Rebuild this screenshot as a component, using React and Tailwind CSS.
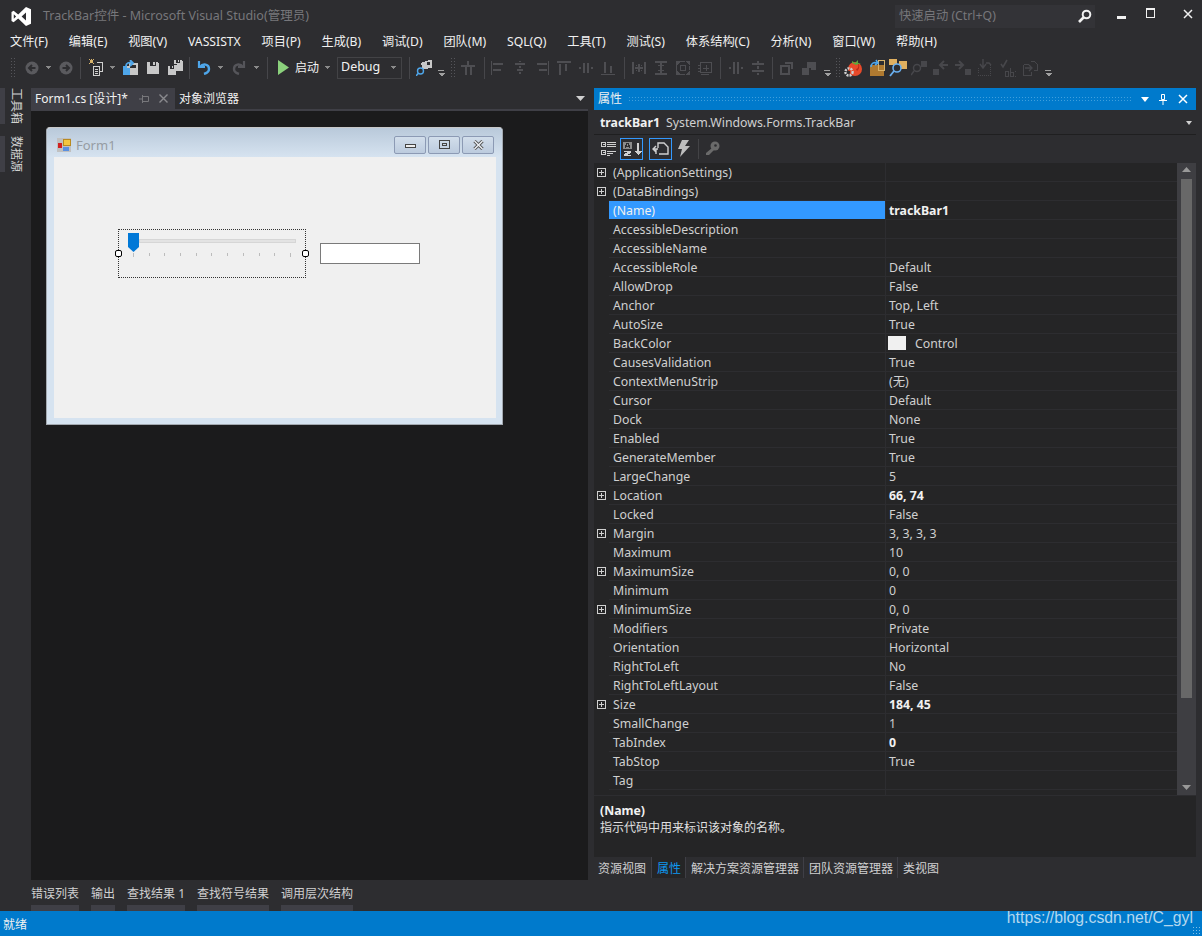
import React from "react";

const G = "#5a5a5e";
const W = "#cfcfcf";
const Svg = ({ w = 16, h = 16, children, className = "" }) => (
  <svg width={w} height={h} viewBox={`0 0 ${w} ${h}`} className={"block shrink-0 " + className} fill="none" shapeRendering="crispEdges">{children}</svg>
);
const Drop = () => (<Svg w={6} h={4}><path d="M0 0h5v1h-1v1h-1v1h-1v-1h-1v-1h-1z" fill="#8a8a8a" /></Svg>);
const OverDrop = () => (<Svg w={7} h={8} className="mt-[10px]"><path d="M0 1h6" stroke="#a0a0a0" /><path d="M0 4h7l-3.5 3.5z" fill="#a0a0a0" /></Svg>);
const Grip = () => (<div className="w-[5px] h-[22px] bg-[radial-gradient(#55555a_1px,transparent_1px)] bg-[length:3px_3px]" />);
const Sep = () => <div className="w-px h-[22px] bg-[#46464a] shrink-0" />;
const Space = ({ c }) => <div className={c + " shrink-0"} />;
const Slot = ({ c = "w-[22px]", children }) => <div className={c + " flex items-center justify-center h-[22px] shrink-0"}>{children}</div>;

const Circ = ({ dir }) => (
  <Svg w={16} h={16}>
    <circle cx="8" cy="8" r="6.5" fill={G} shapeRendering="auto" />
    <path d={dir < 0 ? "M11.5 8h-6M8 5L5 8l3 3" : "M4.5 8h6M8 5l3 3-3 3"} stroke="#2d2d30" strokeWidth="2" shapeRendering="auto" />
  </Svg>
);
const NewProj = () => (
  <Svg w={15} h={17}>
    <path d="M4.5 7.5h6v9h-6z M7.5 3.5h6v9h-3" stroke={W} />
    <path d="M6 10h3M6 12h3M6 14h3" stroke={W} />
    <path d="M0 0h1v1H0zM2 0h1v1H2zM4 0h1v1H4zM1 1h3v3H1zM0 4h1v1H0zM4 4h1v1H4z" fill="#d8b36a" />
  </Svg>
);
const Open = () => (
  <Svg w={15} h={15}>
    <path d="M6 3h9v12H6z" fill="#c8c8c8" />
    <path d="M7 5h6v8H7z" fill="#2d2d30" />
    <path d="M0 6h6l1 2h8l-2 7H0z" fill="#c8c8c8" />
    <path d="M0 6h4v2h3v7H0z" fill="#4ea6ea" />
    <path d="M3 6c0-3 3-4 6-3M7 0l3 3-3 3" stroke="#4ea6ea" strokeWidth="1.8" shapeRendering="auto" />
  </Svg>
);
const Save = () => (
  <Svg w={12} h={12}>
    <path d="M0 0h10l2 2v10H0z" fill="#c8c8c8" />
    <path d="M3 0h6v4H3z" fill="#2d2d30" />
    <path d="M6 0h2v3H6z" fill="#c8c8c8" />
  </Svg>
);
const SaveAll = () => (
  <Svg w={15} h={15}>
    <path d="M6 0h7l2 2v9H6z" fill="#c8c8c8" /><path d="M8 0h4v3H8z" fill="#2d2d30" /><path d="M10 0h1v2h-1z" fill="#c8c8c8" />
    <path d="M5 4h4v1H5zM5 4h1v3H5z" fill="#2d2d30" />
    <path d="M0 6h7l1 1v8H0z" fill="#c8c8c8" /><path d="M2 6h4v3H2z" fill="#2d2d30" /><path d="M4 6h1v2H4z" fill="#c8c8c8" />
  </Svg>
);
const Undo = ({ c = "#4ea6ea", flip }) => (
  <Svg w={14} h={15} className={flip ? "-scale-x-100" : ""}>
    <path d="M2 1v6h6" stroke={c} strokeWidth="2.2" shapeRendering="auto" />
    <path d="M3 7c3-4 9-3 9 2 0 2-2 4-5 5" stroke={c} strokeWidth="2.4" shapeRendering="auto" />
  </Svg>
);
const Play = () => (<Svg w={11} h={15}><path d="M0 0l11 7.5L0 15z" fill="#8bd17c" shapeRendering="auto" /></Svg>);
const Config = () => (
  <Svg w={16} h={17}>
    <path d="M5 4l8-3h3v8l-9 1z" fill="#c8c8c8" /><path d="M11 3h3v3h-3z" fill="#2d2d30" />
    <circle cx="4.5" cy="12" r="3" stroke="#4ea6ea" strokeWidth="1.4" shapeRendering="auto" />
    <path d="M2 14.5L0 17" stroke="#4ea6ea" strokeWidth="1.6" shapeRendering="auto" />
  </Svg>
);
const BAR = "#4e4e52";
const bars = (d, s) => () => (
  <Svg w={16} h={16}>
    <path d={d} fill={BAR} />
    {s ? <path d={s} stroke={BAR} /> : null}
  </Svg>
);
const grayIcons = [
  bars("M1 1h1v14H1zM3 3h10v2H3zM3 9h8v2H3z"),
  bars("M3 3h10v2H3zM5 9h6v2H5zM7 1h2v1H7zM7 6h2v2H7zM7 12h2v2H7z"),
  bars("M14 1h1v14h-1zM3 3h10v2H3zM5 9h8v2H5z"),
  bars("M1 1h14v2H1zM3 4h2v11H3zM9 4h2v7H9z"),
  bars("M1 7h2v2H1zM5 3h2v10H5zM9 3h2v10H9zM13 7h2v2h-2z"),
  bars("M1 14h14v1H1zM4 2h2v11H4zM10 6h2v7h-2z"),
];
const Ic7 = bars("M1 2h2v12H1zM13 2h2v12h-2zM7 4h2v8H7zM4 7h8v2H4zM5 5h1v1H5zM10 5h1v1h-1zM5 10h1v1H5zM10 10h1v1h-1z");
const Ic8 = bars("M2 1h12v2H2zM2 13h12v2H2zM7 3h2v10H7zM5 5h6v1H5zM5 10h6v1H5z");
const Ic9 = bars("M1 1h5L1 6zM15 1h-5l5 5zM1 15h5l-5-5zM15 15h-5l5-5z", "M5.5 5.5h5v5h-5zM1.5 6v4M14.5 6v4M6 1.5h4M6 14.5h4");
const Ic10 = bars("M1 5h2v1H1zM1 8h2v1H1zM1 11h2v1H1zM4 14h8v1H4z", "M3.5 2.5h11v10h-11zM9 5v6M6 8h6");
const Ic11 = bars("M1 7h2v2H1zM5 2h2v12H5zM9 2h2v12H9zM13 7h2v2h-2z");
const Ic12 = bars("M2 3h12v2H2zM2 10h12v2H2zM7 1h2v2H7zM7 6h2v3H7zM7 13h2v2H7z");
const Ic13 = () => (<Svg w={16} h={16}><path d="M2 6h8v8H2z" stroke={BAR} strokeWidth="2" /><path d="M6 2h8v7h-2V4H6z" fill={BAR} /></Svg>);
const Ic14 = () => (<Svg w={16} h={16}><path d="M1 8h7v7H1z" fill={BAR} /><path d="M6 2h9v8h-5V8H6z" fill={BAR} /></Svg>);
const Tomato = () => (
  <Svg w={20} h={18}>
    <circle cx="12" cy="10" r="7" fill="#e84a2a" shapeRendering="auto" />
    <path d="M13 10c3 0 3-5 1-6 3 0 3 6 0 8z" fill="#b52a18" shapeRendering="auto" />
    <path d="M9 2l3 2 3-3v3l3 0-5 2-4-2z" fill="#5ea83c" shapeRendering="auto" />
    <circle cx="6" cy="13" r="3.6" stroke="#cfcfcf" strokeWidth="2.4" strokeDasharray="2 1" shapeRendering="auto" />
    <circle cx="6" cy="13" r="1.2" fill="#2d2d30" shapeRendering="auto" />
  </Svg>
);
const Book = () => (
  <Svg w={16} h={18}>
    <path d="M1 6h14V17H1z" fill="#b07a30" /><path d="M9 1h6v10H9z" stroke="#d8b36a" />
    <path d="M2 8c0-4 3-5 6-4M7 1l2 3-3 2" stroke="#4ea6ea" strokeWidth="1.6" shapeRendering="auto" />
  </Svg>
);
const Folders = () => (
  <Svg w={18} h={18}>
    <path d="M0 0h8v6H0zM10 2h8v8h-8z" fill="#e0b060" />
    <circle cx="8" cy="9" r="4" fill="#2d2d30" stroke="#6ab0f0" strokeWidth="1.6" shapeRendering="auto" />
    <path d="M5 12l-4 5" stroke="#6ab0f0" strokeWidth="1.8" shapeRendering="auto" />
  </Svg>
);
const D = "#47474b";
const FindG = () => (<Svg w={16} h={16}><circle cx="6" cy="8" r="3.5" stroke={D} strokeWidth="1.5" shapeRendering="auto" /><path d="M3 11l-3 4" stroke={D} strokeWidth="1.5" shapeRendering="auto" /><path d="M10 1h6v6h-6z" fill={D} /></Svg>);
const ArL = () => (<Svg w={18} h={16}><path d="M1 9h6v6H1z" fill={D} /><path d="M16 5H9M12 1L8 5l4 4" stroke={D} strokeWidth="2" shapeRendering="auto" /></Svg>);
const ArR = () => (<Svg w={18} h={16}><path d="M11 9h6v6h-6z" fill={D} /><path d="M1 5h7M5 1l4 4-4 4" stroke={D} strokeWidth="2" shapeRendering="auto" /></Svg>);
const Down = () => (<Svg w={16} h={17}><path d="M1 16h13M13.5 6v9M1.5 9v6" stroke={D} strokeDasharray="1 1" /><path d="M6 0v8M3 5l3 4 3-4M9 4h3l2 2" stroke={D} strokeWidth="1.4" shapeRendering="auto" /></Svg>);
const Abc = () => (<Svg w={16} h={18}><path d="M1 5l2 3 4-7" stroke={D} strokeWidth="1.6" shapeRendering="auto" /><path d="M5 12h3v5H5zM10 9v8h3v-4h-3M15 12h1M15 17h1" stroke={D} /></Svg>);
const Paste = () => (<Svg w={16} h={16}><path d="M1.5 4.5h5M1.5 4.5v11h8v-4M8.5 1.5h4l3 3v6h-4" stroke={D} /><path d="M3 8h6M7 5l3 3-3 3" stroke={D} strokeWidth="1.3" shapeRendering="auto" /></Svg>);

const Logo = () => (
  <svg width="21" height="21" viewBox="0 0 21 21" className="block">
    <path d="M15 1l5 2.2v14.6L15 20 7.2 12.6 2.6 16.2 0.5 15V6l2.1-1.2 4.6 3.6zM15 6.5l-4.4 4 4.4 4zM2.8 8.2v4.6l2.3-2.3z" fill="#fff" fillRule="evenodd" />
  </svg>
);

const menus = ["文件(F)", "编辑(E)", "视图(V)", "VASSISTX", "项目(P)", "生成(B)", "调试(D)", "团队(M)", "SQL(Q)", "工具(T)", "测试(S)", "体系结构(C)", "分析(N)", "窗口(W)", "帮助(H)"];

const props = [
  ["(ApplicationSettings)", "", 1],
  ["(DataBindings)", "", 1],
  ["(Name)", "trackBar1", 0, 1, 1],
  ["AccessibleDescription", ""],
  ["AccessibleName", ""],
  ["AccessibleRole", "Default"],
  ["AllowDrop", "False"],
  ["Anchor", "Top, Left"],
  ["AutoSize", "True"],
  ["BackColor", "Control", 0, 0, 0, 1],
  ["CausesValidation", "True"],
  ["ContextMenuStrip", "(无)"],
  ["Cursor", "Default"],
  ["Dock", "None"],
  ["Enabled", "True"],
  ["GenerateMember", "True"],
  ["LargeChange", "5"],
  ["Location", "66, 74", 1, 1],
  ["Locked", "False"],
  ["Margin", "3, 3, 3, 3", 1],
  ["Maximum", "10"],
  ["MaximumSize", "0, 0", 1],
  ["Minimum", "0"],
  ["MinimumSize", "0, 0", 1],
  ["Modifiers", "Private"],
  ["Orientation", "Horizontal"],
  ["RightToLeft", "No"],
  ["RightToLeftLayout", "False"],
  ["Size", "184, 45", 1, 1],
  ["SmallChange", "1"],
  ["TabIndex", "0", 0, 1],
  ["TabStop", "True"],
  ["Tag", ""],
  ["Text", ""],
];

const Plus = () => (
  <Svg w={9} h={9}><path d="M0.5 0.5h8v8h-8z M2 4.5h5M4.5 2v5" stroke="#d0d0d0" /></Svg>
);

const Row = ({ p }) => {
  const [n, v, plus, bold, sel, swatch] = p;
  return (
    <div className="flex h-[19px] shrink-0">
      <div className="w-[15px] flex items-center justify-center pr-[1px] pb-[1px] shrink-0">{plus ? <Plus /> : null}</div>
      <div className={"w-[276px] shrink-0 flex items-center pl-[4px] pt-[2px] border-b border-[#2d2d30] " + (sel ? "bg-[#3399ff] text-[#f1f1f1] border-b-[#252526]" : "")}>{n}</div>
      <div className={"flex-1 flex items-center pl-[3px] pt-[2px] border-l border-b border-[#2d2d30] " + (bold ? "font-bold text-[#f1f1f1]" : "")}>
        {swatch ? <div className="w-[18px] h-[14px] bg-[#f0f0f0] mr-[9px] ml-[-1px] mt-[-2px] shrink-0" /> : null}
        {v}
      </div>
    </div>
  );
};

const Ticks = () => (
  <div className="flex justify-between w-[158px] ml-[5px] mt-[1px]">
    {[0, 1, 2, 3, 4, 5, 6, 7, 8, 9, 10].map((i) => (
      <div key={i} className={"w-px bg-[#bcbcbc] " + (i === 0 || i === 10 ? "h-[4px]" : "h-[3px]")} />
    ))}
  </div>
);

const Handle = ({ className }) => (
  <div className={"absolute w-[7px] h-[7px] rounded-[2px] border border-black bg-white " + className} />
);

const WinBtn = ({ children }) => (
  <div className="w-[32px] h-[18px] border border-[#8c9ab4] rounded-[2px] bg-gradient-to-b from-[#d2deeb] to-[#bccbde] flex items-center justify-center">{children}</div>
);

const Form = () => (
  <div className="w-[457px] h-[298px] ml-[15px] mt-[16px] bg-[#d6e3f0] rounded-t-[4px] border border-[#a3a9b0] border-t-[#c8c8c8] flex flex-col">
    <div className="h-[29px] shrink-0 bg-gradient-to-b from-[#b9c9da] to-[#d6e3f0] rounded-t-[4px] flex items-center pl-[10px] pr-[8px] pt-[4px]">
      <Svg w={14} h={14}>
        <path d="M0 0h14v14H0z" fill="#c0c0c0" />
        <path d="M6 1h7v6H6z" fill="#f3c640" stroke="#b98a20" />
        <path d="M1 5h4v5H1z" fill="#d02020" />
        <path d="M6 9h6v4H6z" fill="#5a90e0" />
      </Svg>
      <span className="ml-[5px] mt-[1px] text-[13px] text-[#969ca3]">Form1</span>
      <div className="ml-auto flex gap-[2px]">
        <WinBtn><div className="w-[11px] h-[4px] mt-[3px] border border-[#444] bg-[#eee]" /></WinBtn>
        <WinBtn><div className="w-[11px] h-[9px] border border-[#444] flex items-center justify-center"><div className="w-[5px] h-[3px] border border-[#444]" /></div></WinBtn>
        <WinBtn>
          <svg width="13" height="10" viewBox="0 0 13 10"><path d="M2.5 1l8 8M10.5 1l-8 8" stroke="#555" strokeWidth="3.2" /><path d="M2.5 1l8 8M10.5 1l-8 8" stroke="#eef2f7" strokeWidth="1.4" /></svg>
        </WinBtn>
      </div>
    </div>
    <div className="ml-[7px] w-[442px] h-[261px] bg-[#f0f0f0] pl-[64px] pt-[72px] flex items-start">
      <div className="relative w-[188px] h-[49px] border border-dotted border-[#333] pl-[9px] pt-[3px]">
        <Handle className="left-[-4px] top-[20px]" />
        <Handle className="right-[-4px] top-[20px]" />
        <div className="flex items-start">
          <svg width="11" height="19" viewBox="0 0 11 19" className="block shrink-0"><path d="M0 0h11v14l-5.5 5L0 14z" fill="#0078d7" /></svg>
          <div className="w-[157px] h-[4px] mt-[6px] bg-[#e3e3e3] border border-[#d6d6d6]" />
        </div>
        <Ticks />
      </div>
      <div className="ml-[14px] mt-[14px] w-[100px] h-[21px] bg-white border border-[#7a7a7a]" />
    </div>
  </div>
);

const sepTabs = ["资源视图", "属性", "解决方案资源管理器", "团队资源管理器", "类视图"];

export default function App() {
  return (
    <div className="w-[1202px] h-[936px] bg-[#2d2d30] flex flex-col overflow-hidden text-[12.3px] text-[#d0d0d0] font-['Noto_Sans','Noto_Sans_CJK_SC',sans-serif] leading-none">
      {/* title bar */}
      <div className="h-[32px] shrink-0 flex items-center pl-[11px]">
        <Logo />
        <span className="ml-[11px] text-[12.5px] text-[#77777b]">TrackBar控件 - Microsoft Visual Studio(管理员)</span>
        <div className="ml-auto w-[200px] h-[23px] mt-[1px] bg-[#333337] flex items-center justify-between pl-[4px] pr-[3px] text-[#77777b]">
          <span>快速启动 (Ctrl+Q)</span>
          <svg width="15" height="15" viewBox="0 0 15 15"><circle cx="9.5" cy="5.5" r="3.8" stroke="#f1f1f1" strokeWidth="2" fill="none" /><path d="M6.5 8.5L2 13" stroke="#f1f1f1" strokeWidth="2.6" /></svg>
        </div>
        <div className="w-[22px]" />
        <div className="w-[9px] h-[3px] bg-[#f1f1f1] mt-[3px]" />
        <div className="w-[9px] h-[10px] ml-[20px] mb-[6px] border border-[#f1f1f1] border-t-[2px]" />
        <svg width="10" height="10" viewBox="0 0 10 10" className="ml-[28px] mr-[9px] mb-[4px]"><path d="M1 1l8 8M9 1L1 9" stroke="#f1f1f1" strokeWidth="1.5" /></svg>
      </div>
      {/* menu */}
      <div className="h-[20px] shrink-0 flex items-center pl-[10px] gap-[20.85px] text-[#f1f1f1] text-[12.2px]">
        {menus.map((m) => <span key={m} className="whitespace-nowrap">{m}</span>)}
      </div>
      {/* toolbar */}
      <div className="h-[36px] shrink-0 flex items-center pl-[10px] pb-[5px]">
        <Grip />
        <Slot c="w-[31px] ml-[1px]"><Circ dir={-1} /></Slot>
        <Slot c="w-[4px]"><Drop /></Slot>
        <Slot c="w-[29px]"><Circ dir={1} /></Slot>
        <Sep />
        <Slot c="w-[24px] ml-[3px]"><NewProj /></Slot>
        <Slot c="w-[10px]"><Drop /></Slot>
        <Slot c="w-[24px]"><Open /></Slot>
        <Slot c="w-[22px]"><Save /></Slot>
        <Slot c="w-[22px]"><SaveAll /></Slot>
        <Space c="w-[3px]" />
        <Sep />
        <Slot c="w-[28px]"><Undo /></Slot>
        <Slot c="w-[6px]"><Drop /></Slot>
        <Slot c="w-[30px]"><Undo c="#55555a" flip /></Slot>
        <Slot c="w-[6px]"><Drop /></Slot>
        <Space c="w-[7px]" />
        <Sep />
        <Slot c="w-[30px]"><Play /></Slot>
        <span className="text-[#f1f1f1] whitespace-nowrap text-[12px] ml-[-3px] w-[29px]">启动</span>
        <Slot c="w-[8px]"><Drop /></Slot>
        <div className="ml-[5px] w-[65px] h-[22px] border border-[#434346] flex items-center justify-between pl-[3px] pr-[4px] text-[#f1f1f1] text-[12.5px]">
          <span>Debug</span><Drop />
        </div>
        <Space c="w-[7px]" />
        <Sep />
        <Slot c="w-[28px]"><Config /></Slot>
        <Slot c="w-[7px]"><OverDrop /></Slot>
        <Slot c="w-[14px]"><Grip /></Slot>
        <Slot c="w-[18px]"><Svg w={16} h={16}><path d="M1 5h14v2H1zM5 7h2v8H5zM10 7h2v8h-2zM7 1h2v4H7z" fill={BAR} /></Svg></Slot>
        <Space c="w-[7px]" />
        <Sep />
        <Space c="w-[2px]" />
        {grayIcons.map((I, i) => <Slot key={i}><I /></Slot>)}
        <Space c="w-[5px]" />
        <Sep />
        <Space c="w-[3px]" />
        <Slot><Ic7 /></Slot><Slot><Ic8 /></Slot><Slot><Ic9 /></Slot><Slot><Ic10 /></Slot>
        <Space c="w-[4px]" />
        <Sep />
        <Space c="w-[4px]" />
        <Slot><Ic11 /></Slot><Slot><Ic12 /></Slot>
        <Space c="w-[3px]" />
        <Sep />
        <Space c="w-[3px]" />
        <Slot><Ic13 /></Slot><Slot><Ic14 /></Slot>
        <Slot c="w-[14px]"><OverDrop /></Slot>
        <Slot c="w-[6px]"><Grip /></Slot>
        <Slot c="w-[26px]"><Tomato /></Slot>
        <Slot><Book /></Slot>
        <Slot c="w-[20px]"><Folders /></Slot>
        <Slot><FindG /></Slot>
        <Slot><ArL /></Slot>
        <Slot><ArR /></Slot>
        <Slot><Down /></Slot>
        <Slot c="w-[24px]"><Abc /></Slot>
        <Slot c="w-[20px]"><Paste /></Slot>
        <Slot c="w-[16px]"><OverDrop /></Slot>
      </div>
      {/* main */}
      <div className="h-[792px] shrink-0 flex">
        {/* rail */}
        <div className="w-[31px] shrink-0 flex flex-col gap-[12px]">
          {["工具箱", "数据源"].map((t) => (
            <div key={t} className="flex h-[36px] items-start">
              <div className="w-[5px] h-full bg-[#3f3f46]" />
              <span className="ml-[5px] text-[12px] leading-[12px] [writing-mode:vertical-rl] [text-orientation:sideways] text-[#d0d0d0] whitespace-nowrap">{t}</span>
            </div>
          ))}
        </div>
        {/* doc */}
        <div className="w-[557px] shrink-0 flex flex-col">
          <div className="h-[21px] shrink-0 flex items-center">
            <div className="w-[144px] h-full bg-[#3f3f46] flex items-center pl-[4px] text-[#f1f1f1] text-[12px]">
              <span className="whitespace-nowrap">Form1.cs [设计]*</span>
              <svg width="10" height="10" viewBox="0 0 10 10" className="ml-[11px]"><path d="M0 5h3M3.5 2.5h6v5h-6zM3.5 1v8" stroke="#77777b" fill="none" /></svg>
              <svg width="9" height="9" viewBox="0 0 9 9" className="ml-[10px]"><path d="M0.5 0.5l8 8M8.5 0.5l-8 8" stroke="#8a8a8e" strokeWidth="1.4" /></svg>
            </div>
            <span className="ml-[4px] text-[#f1f1f1] whitespace-nowrap text-[12px]">对象浏览器</span>
            <div className="ml-auto mr-[3px]"><svg width="9" height="5" viewBox="0 0 9 5" className="block"><path d="M0 0h9L4.5 5z" fill="#d0d0d0" /></svg></div>
          </div>
          <div className="h-[2px] shrink-0 bg-[#3f3f46]" />
          <div className="flex-1 bg-[#1b1b1c] min-h-0"><Form /></div>
        </div>
        <div className="w-[6px] shrink-0" />
        {/* props */}
        <div className="w-[602px] shrink-0 flex flex-col">
          <div className="h-[22px] shrink-0 bg-[#007acc] flex items-center pl-[4px] pr-[8px] text-[#f1f1f1] text-[12px]">
            <span>属性</span>
            <div className="flex-1 h-[6px] mx-[6px] bg-[radial-gradient(#3f9fdd_0.7px,transparent_0.8px)] bg-[length:3px_3px]" />
            <svg width="8" height="5" viewBox="0 0 8 5" className="ml-[4px]"><path d="M0 0h8L4 5z" fill="#fff" /></svg>
            <svg width="8" height="12" viewBox="0 0 8 12" className="ml-[10px]"><path d="M2.5 1.5h3v5h-3zM0 7.5h8M4 8v4" stroke="#fff" fill="none" /></svg>
            <svg width="10" height="10" viewBox="0 0 10 10" className="ml-[11px]"><path d="M1 1l8 8M9 1L1 9" stroke="#fff" strokeWidth="1.5" /></svg>
          </div>
          <div className="h-[25px] shrink-0 flex items-center pl-[6px] pr-[4px] pt-[2px] border-b border-[#1f1f20]">
            <span className="font-bold text-[#f1f1f1]">trackBar1</span>
            <span className="ml-[6px]">System.Windows.Forms.TrackBar</span>
            <svg width="6" height="4" viewBox="0 0 6 4" className="ml-auto"><path d="M0 0h6L3 4z" fill="#d0d0d0" /></svg>
          </div>
          <div className="h-[27px] shrink-0 flex items-center pl-[3px]">
            <div className="w-[23px] h-[22px] flex items-center justify-center"><Svg w={15} h={15}><path d="M0.5 1.5h4v4h-4zM0.5 9.5h4v4h-4zM6 1h9M6 3h9M6 5h9M1.5 3.5h2M1.5 11.5h2M6 10h9M6 12h6M6 14h3" stroke={W} /></Svg></div>
            <div className="w-[23px] h-[22px] border border-[#3399ff] flex items-center justify-center">
              <Svg w={11} h={16}><path d="M1 1h9v7H1z" fill="#8a8a8a" /><path d="M3 7l2-5 1 0 2 5M4 5h3" stroke="#2d2d30" /><path d="M2 10h7v2l-4 2h4v1H2v-2l4-2H2z" fill="#d0d0d0" /></Svg>
              <Svg w={8} h={14} className="ml-[1px]"><path d="M3 1h2v8h3l-4 4-4-4h3z" fill="#d0d0d0" /></Svg>
            </div>
            <div className="w-[23px] h-[22px] border border-[#3399ff] ml-[6px] flex items-center justify-center">
              <svg width="17" height="16" viewBox="0 0 17 16"><path d="M6 7V2h6l4 4v7H7" stroke="#d0d0d0" strokeWidth="1.4" fill="none" /><path d="M1 8h5M4 5L1 8l3 3M4 8v5" stroke="#d0d0d0" strokeWidth="1.4" fill="none" /></svg>
            </div>
            <svg width="13" height="17" viewBox="0 0 13 17" className="ml-[5px]"><path d="M5 0h7L8 6h5L3 17l2-8H1z" fill="#bdbdbd" /></svg>
            <div className="w-px h-[20px] bg-[#434346] ml-[8px]" />
            <svg width="15" height="15" viewBox="0 0 15 15" className="ml-[6px]"><circle cx="10" cy="5" r="4.5" fill="#6a6a6a" /><path d="M7 7L1 12v2h3l5-5z" fill="#6a6a6a" /><circle cx="10.5" cy="4.5" r="1.3" fill="#2d2d30" /></svg>
          </div>
          {/* grid */}
          <div className="h-[632px] shrink-0 flex overflow-hidden bg-[#252526] mt-[1px]">
            <div className="w-[583px] shrink-0 flex flex-col overflow-hidden text-[#d0d0d0]">
              {props.map((p) => <Row key={p[0]} p={p} />)}
            </div>
            <div className="w-[19px] shrink-0 bg-[#3e3e42] flex flex-col items-center">
              <svg width="9" height="5" viewBox="0 0 9 5" className="mt-[4px] shrink-0"><path d="M0 5h9L4.5 0z" fill="#999" /></svg>
              <div className="w-[11px] h-[519px] mt-[7px] bg-[#686868] shrink-0" />
              <svg width="9" height="5" viewBox="0 0 9 5" className="mt-auto mb-[5px] shrink-0"><path d="M0 0h9L4.5 5z" fill="#999" /></svg>
            </div>
          </div>
          {/* description */}
          <div className="h-[62px] shrink-0 bg-[#252526] border-t border-[#2d2d30] pl-[6px] pt-[9px] flex flex-col gap-[5px]">
            <span className="font-bold text-[#f1f1f1]">(Name)</span>
            <span className="text-[#e0e0e0] text-[12px]">指示代码中用来标识该对象的名称。</span>
          </div>
          <div className="h-[21px] shrink-0 flex items-center text-[#d0d0d0] text-[12px]">
            {sepTabs.map((t, i) => (
              <div key={t} className={"h-full flex items-center pl-[5px] first:pl-[4px] first:pr-[5px] pr-[4px] pt-[2px] whitespace-nowrap border-r border-[#3f3f46] last:border-r-0 " + (i === 1 ? "bg-[#252526] text-[#0e97f0]" : "")}>{t}</div>
            ))}
          </div>
        </div>
      </div>
      {/* bottom tabs */}
      <div className="h-[31px] shrink-0 pl-[31px] flex gap-[12px] text-[12px]">
        {["错误列表", "输出", "查找结果 1", "查找符号结果", "调用层次结构"].map((t) => (
          <div key={t} className="flex flex-col pt-[8px] justify-between">
            <span className="whitespace-nowrap">{t}</span>
            <div className="h-[6px] bg-[#3f3f46]" />
          </div>
        ))}
      </div>
      {/* status */}
      <div className="h-[25px] shrink-0 bg-[#007acc] flex items-center pl-[3px] pt-[2px] text-[12px] text-[#f1f1f1] relative">
        <span>就绪</span>
        <span className="ml-auto mr-[9px] mb-[14px] text-[15.8px] text-[#b4d7ee] font-['Liberation_Sans',sans-serif]">https://blog.csdn.net/C_gyl</span>
        <div className="absolute right-[2px] bottom-[2px] w-[8px] h-[8px] bg-[radial-gradient(#7fbde6_0.7px,transparent_0.8px)] bg-[length:3px_3px]" />
      </div>
    </div>
  );
}
